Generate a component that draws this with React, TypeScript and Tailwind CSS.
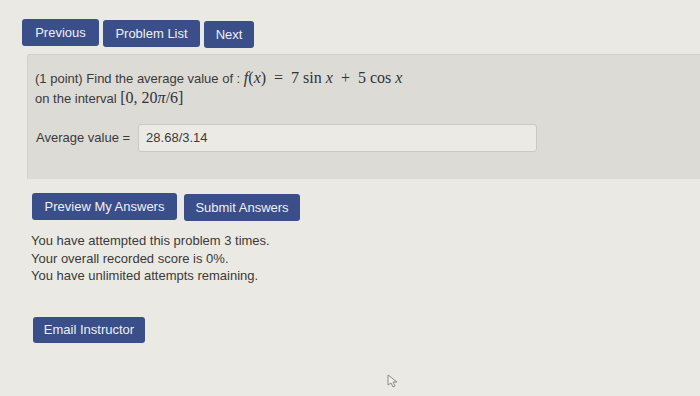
import React from "react";

const btn =
  "bg-[#3a4e89] text-[#eef0f6] rounded-[3px] text-[13px] leading-none flex items-center justify-center";

const serif = { fontFamily: '"Liberation Serif", "DejaVu Serif", serif' };

export default function App() {
  return (
    <div
      className="w-[700px] h-[396px] bg-[#ebe9e4] overflow-hidden relative text-[#3a3a3a]"
      style={{ fontFamily: '"Liberation Sans", Arial, sans-serif' }}
    >
      <div className="pt-[19px] pl-[22px] flex gap-[4px]">
        <div className={`${btn} w-[77px] h-[27px]`}>Previous</div>
        <div className={`${btn} w-[97px] h-[27px] mt-[1px]`}>Problem List</div>
        <div className={`${btn} w-[50px] h-[27px] mt-[2px]`}>Next</div>
      </div>

      <div className="mt-[6px] ml-[27px] h-[125px] bg-[#dddbd6] border-t border-l border-[#d3d1cc] rounded-tl-[3px] pl-[7px] pt-[13px]">
        <div className="text-[13px] leading-[19px] flex items-baseline">
          <span>(1 point) Find the average value of :&nbsp;</span>
          <span className="text-[16px] text-[#333] whitespace-pre" style={serif}>
            <i>f</i>(<i>x</i>)  =  7 sin <i>x</i>  +  5 cos <i>x</i>
          </span>
        </div>
        <div className="text-[13px] leading-[19px] flex items-baseline">
          <span>on the interval&nbsp;</span>
          <span className="text-[16px] text-[#333]" style={serif}>
            [0, 20<i>π</i>/6]
          </span>
        </div>
        <div className="flex items-center mt-[16px] ml-[1px]">
          <span className="text-[13px]">Average value =</span>
          <div className="ml-[8px] w-[399px] h-[28px] bg-[#eceae5] border border-[#cbc9c4] rounded-[3px] flex items-center pl-[7px] text-[13px]">
            28.68/3.14
          </div>
        </div>
      </div>

      <div className="ml-[32px] mt-[14px] flex gap-[7px]">
        <div className={`${btn} w-[145px] h-[27px]`}>Preview My Answers</div>
        <div className={`${btn} w-[116px] h-[27px] mt-[1px]`}>Submit Answers</div>
      </div>

      <div className="ml-[31px] mt-[11px] text-[13px] leading-[17.5px]">
        <div>You have attempted this problem 3 times.</div>
        <div>Your overall recorded score is 0%.</div>
        <div>You have unlimited attempts remaining.</div>
      </div>

      <div className="ml-[33px] mt-[32px] flex">
        <div className={`${btn} w-[112px] h-[26px]`}>Email Instructor</div>
      </div>

      <svg
        className="absolute left-[387px] top-[374px]"
        width="12"
        height="14"
        viewBox="0 0 12 14"
      >
        <path
          d="M1 1 L1 11 L4 9 L6 13 L8 12 L6 8 L10 8 Z"
          fill="#f2f0ec"
          stroke="#8a8a8a"
          strokeWidth="1"
        />
      </svg>
    </div>
  );
}
